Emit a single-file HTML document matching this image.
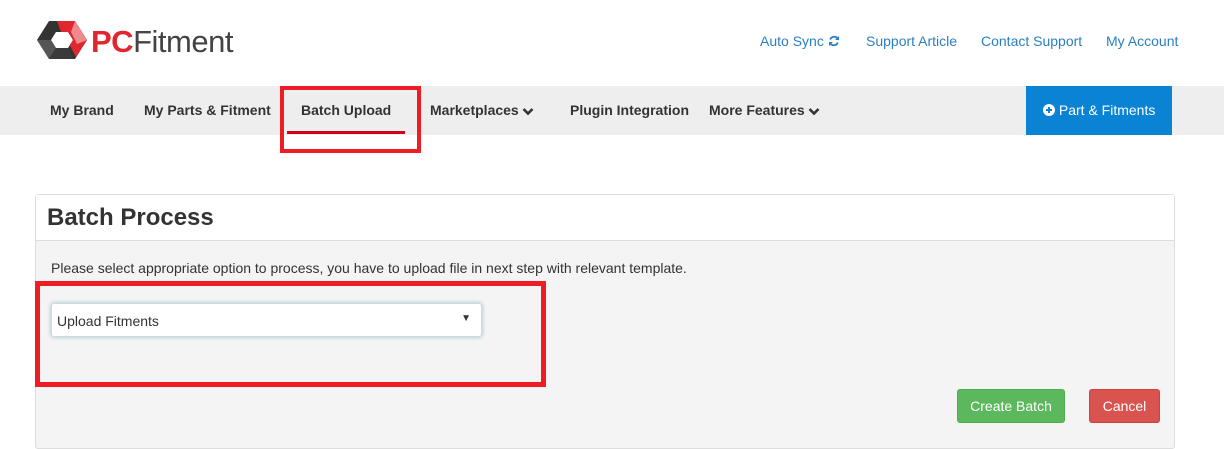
<!DOCTYPE html>
<html><head><meta charset="utf-8"><style>
*{box-sizing:border-box;margin:0;padding:0}
body{width:1224px;height:449px;background:#fff;font-family:"Liberation Sans",Arial,sans-serif;position:relative;overflow:hidden;color:#333}
.abs{position:absolute}
.top a{position:absolute;top:33px;font-size:14px;color:#2a7fc4;text-decoration:none}
.nav{left:0;top:86px;width:1224px;height:49px;background:#eee}
.nav span{position:absolute;top:16px;font-size:14px;font-weight:bold;color:#333}
.red{border:4px solid #ee1c25}
.chev{display:inline-block;vertical-align:middle;margin-left:3px}
</style></head><body>
<svg class="abs" style="left:37px;top:21px" width="50" height="38" viewBox="0 0 50 38">
<defs><clipPath id="ring"><path clip-rule="evenodd" d="M12 0H38L50 19L38 38H12L0 19Z M19 11L14 19L19 27H31L36 19L31 11Z"/></clipPath></defs>
<g clip-path="url(#ring)">
<rect width="50" height="38" fill="#333"/>
<polygon points="20,0 50,0 50,28 40,38 30,19 24,11" fill="#e0262e"/>
<polygon points="38,0 50,19 40,23 34,11" fill="#f08a8e"/>
<polygon points="0,19 14,19 19,27 12,38" fill="#555"/>
<polygon points="12,38 19,27 31,27 36,38" fill="#3a3a3a"/>
</g>
</svg>
<div class="abs" style="left:91px;top:24px;font-size:31px;letter-spacing:-0.5px"><span style="color:#e0262e;font-weight:bold">PC</span><span style="color:#444">Fitment</span></div>
<div class="top">
<a style="left:760px">Auto Sync <svg width="12" height="12" viewBox="0 0 12 12" style="vertical-align:-1px"><path d="M10 4A4.3 4.3 0 0 0 2.2 4.5M2 8A4.3 4.3 0 0 0 9.8 7.5" fill="none" stroke="#2a7fc4" stroke-width="1.8"/><path d="M11 1V5H7Z M1 11V7H5Z" fill="#2a7fc4"/></svg></a>
<a style="left:866px">Support Article</a>
<a style="left:981px">Contact Support</a>
<a style="left:1106px">My Account</a>
</div>
<div class="abs nav">
<span style="left:50px">My Brand</span>
<span style="left:144px">My Parts &amp; Fitment</span>
<span style="left:301px">Batch Upload</span>
<span style="left:430px">Marketplaces<svg class="chev" width="12" height="9" viewBox="0 0 12 9"><path d="M1.5 2L6 6.5L10.5 2" fill="none" stroke="#333" stroke-width="2.6"/></svg></span>
<span style="left:570px">Plugin Integration</span>
<span style="left:709px">More Features<svg class="chev" width="12" height="9" viewBox="0 0 12 9"><path d="M1.5 2L6 6.5L10.5 2" fill="none" stroke="#333" stroke-width="2.6"/></svg></span>
<div class="abs" style="left:287px;top:45px;width:118px;height:3px;background:#d0021b"></div>
<div class="abs" style="left:1026px;top:0;width:146px;height:49px;background:#0a83d4;color:#fff;font-size:14px;padding:16px 0 0 17px"><svg width="12" height="12" viewBox="0 0 12 12" style="vertical-align:-1px"><circle cx="6" cy="6" r="6" fill="#fff"/><path d="M6 3V9M3 6H9" stroke="#0a83d4" stroke-width="2"/></svg> Part &amp; Fitments</div>
</div>
<div class="abs red" style="left:280px;top:86px;width:141px;height:67px"></div>
<div class="abs" style="left:35px;top:194px;width:1140px;height:255px;border:1px solid #ddd;background:#f4f4f4;border-radius:3px">
<div style="background:#fff;height:46px;border-bottom:1px solid #ddd;padding:9px 0 0 11px;font-size:24px;font-weight:bold;color:#333">Batch Process</div>
<div class="abs" style="left:15px;top:65px;font-size:14px">Please select appropriate option to process, you have to upload file in next step with relevant template.</div>
<div class="abs" style="left:15px;top:108px;width:431px;height:34px;background:#fff;border:1px solid #cdd;border-radius:3px;box-shadow:0 0 4px #9bc;font-size:14px;padding:9px 0 0 5px">Upload Fitments<span style="position:absolute;right:10px;top:9px;font-size:10px">&#9660;</span></div>
<div class="abs" style="left:921px;top:194px;width:108px;height:34px;background:#5cb85c;border:1px solid #4cae4c;border-radius:3px;color:#fff;font-size:14px;text-align:center;line-height:32px">Create Batch</div>
<div class="abs" style="left:1053px;top:194px;width:71px;height:34px;background:#d9534f;border:1px solid #d43f3a;border-radius:3px;color:#fff;font-size:14px;text-align:center;line-height:32px">Cancel</div>
</div>
<div class="abs red" style="left:35px;top:281px;width:511px;height:106px;border-width:5px"></div>
</body></html>
